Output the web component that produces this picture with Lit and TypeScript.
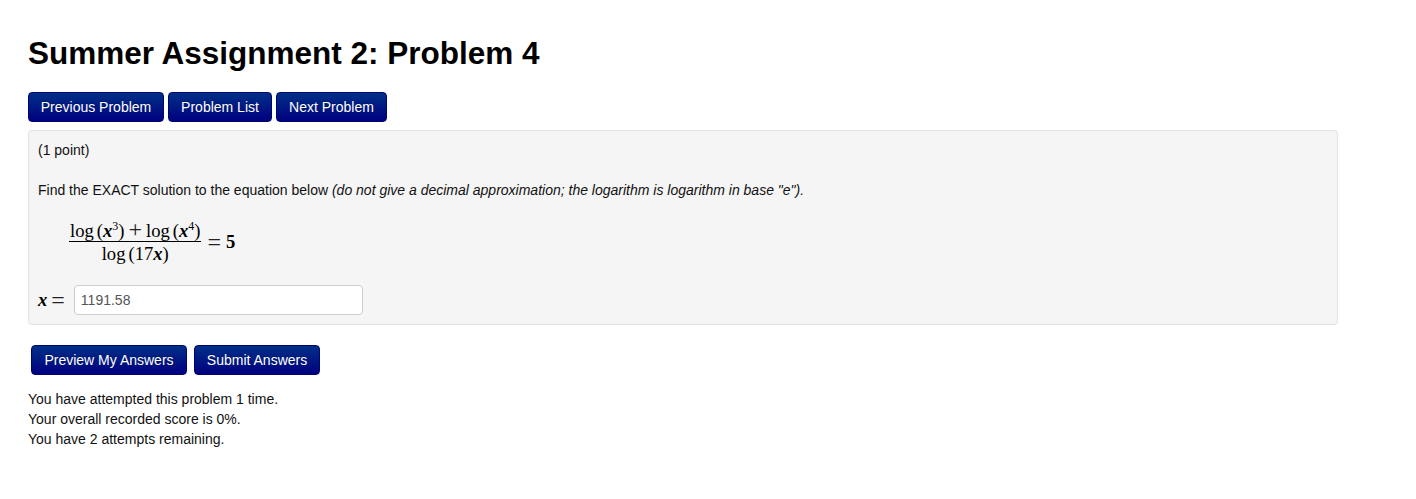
import { LitElement, html, css } from "lit";
import { customElement } from "lit/decorators.js";

@customElement("app-root")
export class AppRoot extends LitElement {
  static styles = css`
    :host { display: block; height: 499px; box-sizing: border-box; padding: 0 28px; font-family: "Liberation Sans", Arial, sans-serif; font-size: 14px; line-height: 20px; color: #111; background: #fff; overflow: hidden; }
    h1 { margin: 0; padding-top: 33px; height: 59px; font-size: 31.5px; line-height: 40px; font-weight: 700; color: #000; letter-spacing: -0.01px; }
    .nav { display: grid; grid-template-columns: 136px 104px 111px; gap: 4px; }
    .actions { display: grid; grid-template-columns: 156px 126px; gap: 7px; margin: 20px 0 0 3px; }
    .btn { box-sizing: border-box; height: 30px; display: flex; align-items: center; justify-content: center; border: 1px solid #00046f; border-radius: 4px; background: linear-gradient(#003087, #00007f); color: #fff; font: 14px/20px "Liberation Sans", Arial, sans-serif; text-shadow: 0 -1px 0 rgba(0,0,0,.25); white-space: nowrap; }
    .panel { box-sizing: border-box; width: 1310px; height: 195px; margin-top: 8px; padding: 9px 9px; background: #f5f5f5; border: 1px solid #e3e3e3; border-radius: 4px; font-size: 14px; line-height: 20px; color: #111; display: flex; flex-direction: column; }
    .desc { margin-top: 20px; }
    .eq { display: flex; align-items: center; margin: 18px 0 0 31px; font-family: "Liberation Serif", "Times New Roman", serif; font-size: 18.6px; color: #000; }
    .frac { display: flex; flex-direction: column; align-items: center; }
    .num { box-sizing: border-box; padding: 3px 1px 0; border-bottom: 1.5px solid #000; line-height: 20px; height: 24px; white-space: nowrap; }
    .den { line-height: 24px; height: 24px; white-space: nowrap; }
    .paren { margin-left: 3px; }
    .val { margin-left: 6px; display: flex; align-items: center; }
    .five { font-weight: 700; margin-left: 5px; }
    .var { font-style: italic; font-weight: 700; }
    sup { font-size: 12px; line-height: 0; }
    .op { font-size: 24px; line-height: 0; color: #222; }
    .plus { margin: 0 4px; }
    .ans { display: flex; align-items: center; margin-top: 19px; font-family: "Liberation Serif", serif; font-size: 18.6px; color: #000; }
    .gap { margin-left: 4px; }
    .input { box-sizing: border-box; width: 289px; height: 30px; margin-left: 9px; padding: 0 6px; display: flex; align-items: center; background: #fff; border: 1px solid #ccc; border-radius: 4px; font: 14px/20px "Liberation Sans", Arial, sans-serif; color: #555; }
    .status { margin-top: 14px; font-size: 14px; line-height: 20px; }
  `;

  render() {
    const x = html`<span class="var">x</span>`;
    return html`
      <h1>Summer Assignment 2: Problem 4</h1>
      <div class="nav">
        <div class="btn">Previous Problem</div>
        <div class="btn">Problem List</div>
        <div class="btn">Next Problem</div>
      </div>
      <div class="panel">
        <div>(1 point)</div>
        <div class="desc">Find the EXACT solution to the equation below <em>(do not give a decimal approximation; the logarithm is logarithm in base "e").</em></div>
        <div class="eq">
          <div class="frac">
            <div class="num">log<span class="paren">(</span>${x}<sup>3</sup>)<span class="op plus">+</span>log<span class="paren">(</span>${x}<sup>4</sup>)</div>
            <div class="den">log<span class="paren">(</span>17${x})</div>
          </div>
          <span class="val"><span class="op">=</span><span class="five">5</span></span>
        </div>
        <div class="ans">${x}<span class="op gap">=</span><div class="input">1191.58</div></div>
      </div>
      <div class="actions">
        <div class="btn">Preview My Answers</div>
        <div class="btn">Submit Answers</div>
      </div>
      <div class="status">
        <div>You have attempted this problem 1 time.</div>
        <div>Your overall recorded score is 0%.</div>
        <div>You have 2 attempts remaining.</div>
      </div>
    `;
  }
}
